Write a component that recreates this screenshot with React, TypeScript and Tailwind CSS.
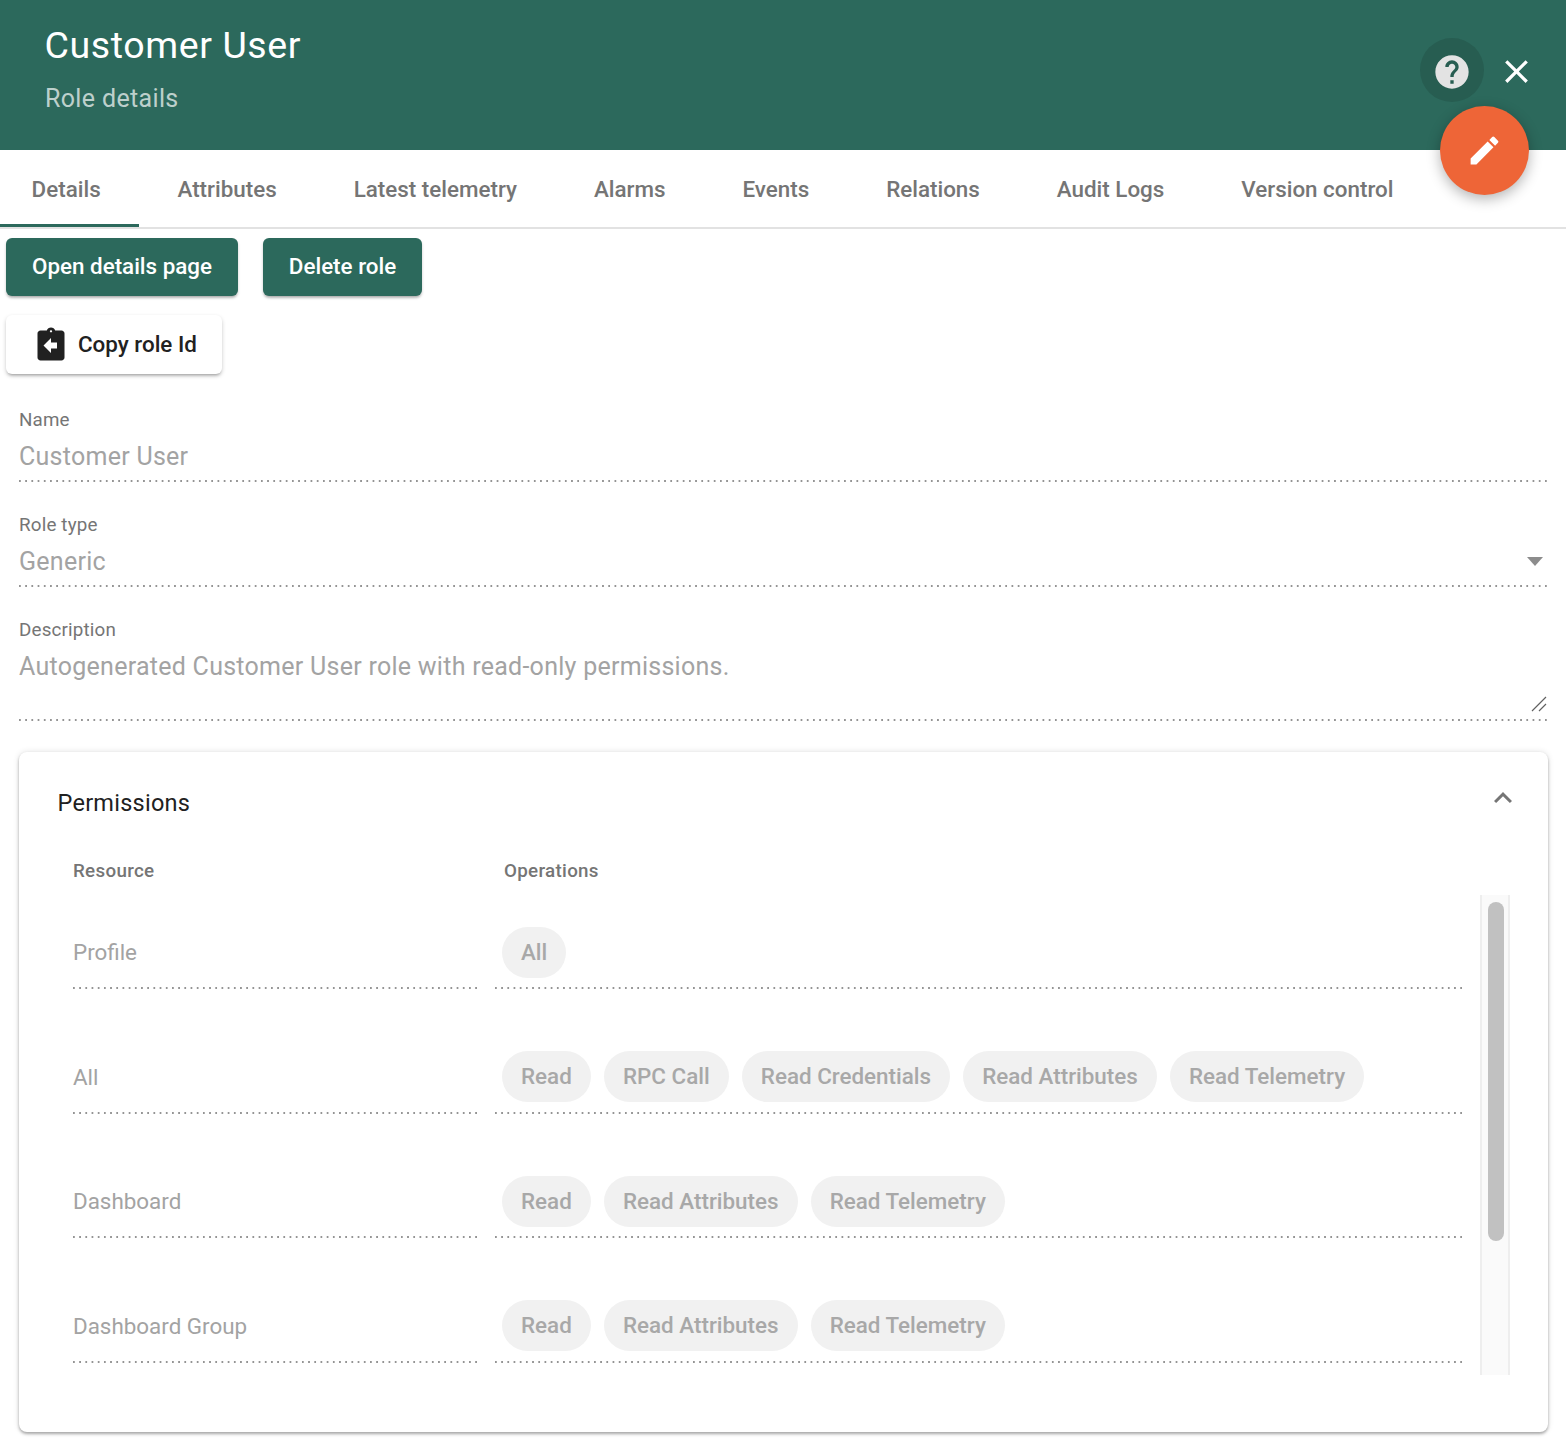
import React from "react";

const dottedField =
  "h-[2px] bg-[linear-gradient(to_right,rgba(0,0,0,0.42)_33%,transparent_0%)] bg-[length:6.215px_2px] bg-repeat-x";
const dottedRow =
  "h-[2px] bg-[linear-gradient(to_right,rgba(0,0,0,0.42)_33%,transparent_0%)] bg-[length:6.2px_2px] bg-repeat-x";

const tabs = ["Attributes", "Latest telemetry", "Alarms", "Events", "Relations", "Audit Logs", "Version control"];

const rows: { name: string; ops: string[]; h: string; chips: string }[] = [
  { name: "Profile", ops: ["All"], h: "h-[94px]", chips: "flex gap-[13.2px]" },
  { name: "All", ops: ["Read", "RPC Call", "Read Credentials", "Read Attributes", "Read Telemetry"], h: "h-[125px]", chips: "flex gap-[13.2px] -translate-y-[1px]" },
  { name: "Dashboard", ops: ["Read", "Read Attributes", "Read Telemetry"], h: "h-[124px]", chips: "flex gap-[13.2px]" },
  { name: "Dashboard Group", ops: ["Read", "Read Attributes", "Read Telemetry"], h: "h-[125px]", chips: "flex gap-[13.2px] -translate-y-[1px]" },
];

function Field({ label, value, arrow }: { label: string; value: string; arrow?: boolean }) {
  return (
    <div className="h-[105px] flex flex-col">
      <div className="text-[18.8px] leading-[22px] tracking-[0.18px] text-[#757575] mt-[5px]">{label}</div>
      <div className="flex items-center justify-between h-[36px] mt-[8px]">
        <span className="text-[25px] text-[#a3a3a3] leading-[36px] tracking-[0.27px]">{value}</span>
        {arrow && <span className="w-0 h-0 mr-[6px] -mt-[2px] border-x-[8.5px] border-x-transparent border-t-[9px] border-t-[#8c8c8c]" />}
      </div>
      <div className={`${dottedField} mt-[5px]`} />
    </div>
  );
}

export default function App() {
  return (
    <div className="relative w-[1566px] h-[1452px] bg-white overflow-hidden font-['Roboto',sans-serif]">
      <header className="h-[150px] bg-[#2c695c] pl-[45px] flex justify-between">
        <div className="text-white">
          <div className="text-[37.5px] leading-[44px] tracking-[0.6px] pt-[23px] h-[67px] -ml-[0.5px]">Customer User</div>
          <div className="text-[25px] leading-[30px] text-white/70 tracking-[0.35px] mt-[17px]">Role details</div>
        </div>
        <div className="flex items-start pr-[18px] pt-[38px] h-[144px]">
          <div className="w-[64px] h-[64px] rounded-full bg-[#275d51] flex items-center justify-center">
            <svg viewBox="0 0 24 24" className="w-[40px] h-[40px] mt-[3px]" fill="#e3e3e3">
              <path d="M12 2C6.48 2 2 6.48 2 12s4.48 10 10 10 10-4.48 10-10S17.52 2 12 2zm1 17h-2v-2h2v2zm2.07-7.75l-.9.92C13.45 12.9 13 13.5 13 15h-2v-.5c0-1.1.45-2.1 1.17-2.83l1.24-1.26c.37-.36.59-.86.59-1.41 0-1.1-.9-2-2-2s-2 .9-2 2H8c0-2.21 1.79-4 4-4s4 1.79 4 4c0 .88-.36 1.68-.93 2.25z" />
            </svg>
          </div>
          <div className="w-[64px] h-[64px] flex items-center justify-center">
            <svg viewBox="0 0 24 24" className="w-[39px] h-[39px] mt-[3px]" fill="#fff">
              <path d="M19 6.41L17.59 5 12 10.59 6.41 5 5 6.41 10.59 12 5 17.59 6.41 19 12 13.41 17.59 19 19 17.59 13.41 12z" />
            </svg>
          </div>
        </div>
      </header>

      <button className="absolute left-[1440px] top-[106px] w-[89px] h-[89px] rounded-full bg-[#ee6537] shadow-[0_4px_14px_rgba(0,0,0,0.3)] flex items-center justify-center">
        <svg viewBox="0 0 24 24" className="w-[37px] h-[37px]" fill="#fff">
          <path d="M3 17.25V21h3.75L17.81 9.94l-3.75-3.75L3 17.25zM20.71 7.04a1 1 0 0 0 0-1.41l-2.34-2.34a1 1 0 0 0-1.41 0l-1.83 1.83 3.75 3.75 1.83-1.83z" />
        </svg>
      </button>

      <nav className="h-[79px] flex border-b-2 border-[#e2e2e2]">
        <div className="w-[139px] h-[77px] pl-[31.6px] border-b-[3px] border-[#2c695c] text-[22.4px] font-medium text-[#757575] leading-[78px]">Details</div>
        {tabs.map((t) => (
          <div key={t} className="px-[38.47px] text-[22.4px] font-medium text-[#757575] leading-[78px]">{t}</div>
        ))}
      </nav>

      <div className="flex gap-[25px] pl-[6px] pt-[9px]">
        <button className="h-[58px] w-[232px] rounded-[6px] bg-[#2c695c] text-white text-[22.4px] font-medium shadow-[0_3px_3px_-2px_rgba(0,0,0,0.2),0_2px_3px_0_rgba(0,0,0,0.2)]">Open details page</button>
        <button className="h-[58px] w-[159px] rounded-[6px] bg-[#2c695c] text-white text-[22.4px] font-medium shadow-[0_3px_3px_-2px_rgba(0,0,0,0.2),0_2px_3px_0_rgba(0,0,0,0.2)]">Delete role</button>
      </div>

      <div className="pl-[6px] pt-[19px]">
        <button className="h-[59px] w-[216px] rounded-[6px] bg-white flex items-center pl-[26.5px] gap-[9.5px] text-[22.4px] font-medium text-[#212121] shadow-[0_3px_3px_-2px_rgba(0,0,0,0.25),0_2px_4px_0_rgba(0,0,0,0.2)]">
          <svg viewBox="0 0 24 24" className="w-[36px] h-[36px] shrink-0 -mt-[2px]" fill="#212121">
            <path d="M19 3h-4.18C14.4 1.84 13.3 1 12 1s-2.4.84-2.82 2H5c-1.1 0-2 .9-2 2v16c0 1.1.9 2 2 2h14c1.1 0 2-.9 2-2V5c0-1.1-.9-2-2-2zm-7-.25c.41 0 .75.34.75.75s-.34.75-.75.75-.75-.34-.75-.75.34-.75.75-.75zM16 15h-4v3l-5-5 5-5v3h4v4z" />
          </svg>
          Copy role Id
        </button>
      </div>

      <div className="pl-[19px] pr-[17px] mt-[30px]">
        <Field label="Name" value="Customer User" />
        <Field label="Role type" value="Generic" arrow />
        <div className="relative h-[141px] flex flex-col">
          <div className="text-[18.8px] leading-[22px] tracking-[0.18px] text-[#757575] mt-[5px]">Description</div>
          <div className="text-[25px] text-[#a3a3a3] leading-[36px] tracking-[0.27px] mt-[8px] h-[70px]">Autogenerated Customer User role with read-only permissions.</div>
          <svg viewBox="0 0 16 16" className="absolute right-[2px] top-[82px] w-[16px] h-[16px]" stroke="#616161" strokeWidth="1.2" fill="none">
            <path d="M1 15L15 1M8 15l7-7" />
          </svg>
          <div className={dottedField} />
        </div>

        <section className="h-[680px] -mt-[3px] mr-[1px] rounded-[8px] bg-white shadow-[0_2px_3px_rgba(0,0,0,0.3),0_0_6px_rgba(0,0,0,0.12)] pl-[39px] pr-[36px] relative">
          <div className="flex items-start justify-between h-[100px]">
            <span className="text-[23.5px] leading-[28px] text-[#212121] mt-[37px] -ml-[0.5px] tracking-[0.25px]">Permissions</span>
            <svg viewBox="0 0 24 24" className="w-[36px] h-[36px] mt-[28px] -mr-[9px]" fill="#757575">
              <path d="M7.41 15.41L12 10.83l4.59 4.58L18 14l-6-6-6 6z" />
            </svg>
          </div>
          <div className="flex text-[18.8px] font-medium tracking-[0.3px] text-[#757575] leading-[22px] pl-[15px] pt-[8px] h-[43px]">
            <span className="w-[431px]">Resource</span>
            <span>Operations</span>
          </div>
          <div className="flex">
            <div className="w-[1422px]">
              {rows.map((r) => (
                <div key={r.name} className={`${r.h} flex flex-col justify-end`}>
                  <div className="flex items-center">
                    <span className="w-[444px] pl-[15px] text-[22.4px] text-[#a3a3a3]">{r.name}</span>
                    <div className={r.chips}>
                      {r.ops.map((o) => (
                        <span key={o} className="h-[51px] px-[19px] rounded-full bg-[#f1f1f1] text-[22.4px] font-medium text-[#a8a8a8] flex items-center">{o}</span>
                      ))}
                    </div>
                  </div>
                  <div className="flex gap-[15.5px] mt-[9px] pl-[15px]">
                    <div className={`${dottedRow} w-[406px]`} />
                    <div className={`${dottedRow} w-[969px]`} />
                  </div>
                </div>
              ))}
            </div>
            <div className="w-[30px] h-[480px] bg-[#fafafa] border-x-2 border-[#eeeeee] pt-[7px] px-[6px]">
              <div className="w-[16px] h-[339px] rounded-full bg-[#c1c1c1]" />
            </div>
          </div>
        </section>
      </div>
    </div>
  );
}
